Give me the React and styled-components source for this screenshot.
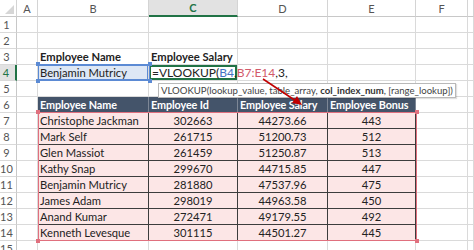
import React from 'react';
import styled, { createGlobalStyle, css } from 'styled-components';

const GlobalStyle = createGlobalStyle`
    body {
        margin: 0;
        background: #fff;
        overflow: hidden;
        font-family: Lato, "Liberation Sans", sans-serif;
    }
`;

const COLS = ['A', 'B', 'C', 'D', 'E', 'F', ''];
const ROW_H = 16;
const HEAD_H = 17;

const Sheet = styled.div`
    position: relative;
    width: 474px;
    height: 250px;
    overflow: hidden;
    display: grid;
    grid-template-columns: 17px 21px 111px 89px 90px 88px 52px 1fr;
    grid-template-rows: ${HEAD_H}px;
    grid-auto-rows: ${ROW_H}px;
    color: #222;
`;

const Corner = styled.div`
    position: relative;
    border-right: 1px solid #d4d4d4;
    border-bottom: 1px solid #c8c8c8;
    &::after {
        content: '';
        position: absolute;
        right: 2px;
        bottom: 2px;
        border-left: 9px solid transparent;
        border-bottom: 9px solid #d6d6d6;
    }
`;

const ColHead = styled.div`
    box-sizing: border-box;
    display: flex;
    align-items: center;
    justify-content: center;
    font-size: 11px;
    color: #555;
    border-right: 1px solid #d4d4d4;
    border-bottom: 1px solid #c8c8c8;
    ${p => p.$active && css`
        background: #e2e2e2;
        color: #217346;
        font-weight: 700;
        border-bottom: 2px solid #217346;
    `}
`;

const RowHead = styled.div`
    box-sizing: border-box;
    display: flex;
    align-items: center;
    justify-content: center;
    padding-right: 3px;
    font-size: 11px;
    color: #555;
    border-right: 1px solid #c8c8c8;
    border-bottom: 1px solid #d9d9d9;
    ${p => p.$active && css`
        background: #e2e2e2;
        color: #217346;
        border-right: 2px solid #217346;
    `}
`;

const Cell = styled.div`
    box-sizing: border-box;
    display: flex;
    align-items: center;
    padding: 0 2px;
    font-size: 11.2px;
    white-space: nowrap;
    border-right: 1px solid #dadada;
    border-bottom: 1px solid #dadada;
    justify-content: ${p => (p.$center ? 'center' : 'flex-start')};
    font-weight: ${p => (p.$bold ? 700 : 400)};
    ${p => p.$variant === 'th' && css`
        background: #44546a;
        color: #fff;
        font-size: 10.8px;
        letter-spacing: -0.1px;
        border-right-color: #7d8796;
        border-bottom-color: #44546a;
    `}
    ${p => p.$variant === 'td' && css`
        background: #fce6e6;
        border-right-color: #3c3c3c;
        border-bottom-color: #3c3c3c;
    `}
    ${p => p.$variant === 'ref' && css`
        background: #dde7f5;
        box-shadow: inset 0 0 0 1px #5b8ad4;
    `}
    ${p => p.$variant === 'active' && css`
        position: relative;
        z-index: 2;
        overflow: visible;
        box-shadow: inset 0 0 0 2px #217346;
        padding-left: 3px;
        font-size: 12px;
    `}
`;

const RefB = styled.span`
    color: #4472c4;
`;

const RefR = styled.span`
    color: #d25a6a;
`;

const Handles = styled.div`
    position: absolute;
    box-sizing: border-box;
    pointer-events: none;
    z-index: 3;
    border: ${p => p.$w}px solid ${p => p.$color};
    & > i {
        position: absolute;
        width: 4px;
        height: 4px;
        background: ${p => p.$color};
    }
    & > i:nth-child(1) { left: -3px; top: -3px; }
    & > i:nth-child(2) { right: -3px; top: -3px; }
    & > i:nth-child(3) { left: -3px; bottom: -3px; }
    & > i:nth-child(4) { right: -3px; bottom: -3px; }
`;

const Tip = styled.div`
    position: absolute;
    z-index: 4;
    left: 158px;
    top: 83px;
    height: 15px;
    box-sizing: border-box;
    padding: 0 2px;
    display: flex;
    align-items: center;
    background: #fff;
    border: 1px solid #b9b9b9;
    box-shadow: 1px 1px 1px rgba(0, 0, 0, 0.12);
    font-size: 9.6px;
    color: #444;
    white-space: nowrap;
    & b {
        font-weight: 700;
        color: #333;
    }
`;

const Arrow = styled.svg`
    position: absolute;
    left: 0;
    top: 0;
    z-index: 5;
    pointer-events: none;
`;

const employees = [
    ['Christophe Jackman', '302663', '44273.66', '443'],
    ['Mark Self', '261715', '51200.73', '512'],
    ['Glen Massiot', '261459', '51250.87', '513'],
    ['Kathy Snap', '299670', '44715.85', '447'],
    ['Benjamin Mutricy', '281880', '47537.96', '475'],
    ['James Adam', '298019', '44963.58', '450'],
    ['Anand Kumar', '272471', '49179.55', '492'],
    ['Kenneth Levesque', '301115', '44501.27', '445']
];

const tableHead = ['Employee Name', 'Employee Id', 'Employee Salary', 'Employee Bonus'];

// cells for columns A..G of one row
function rowCells(r) {
    const blank = i => <Cell key={i} />;
    const out = [blank('a')];
    if (r === 3) {
        out.push(<Cell key="b" $bold>Employee Name</Cell>);
        out.push(<Cell key="c" $bold>Employee Salary</Cell>);
        out.push(blank('d'), blank('e'));
    } else if (r === 4) {
        out.push(<Cell key="b" $variant="ref">Benjamin Mutricy</Cell>);
        out.push(
            <Cell key="c" $variant="active">
                =VLOOKUP(<RefB>B4</RefB>,<RefR>B7:E14</RefR>,3,
            </Cell>
        );
        out.push(blank('d'), blank('e'));
    } else if (r === 6) {
        tableHead.forEach((t, i) => out.push(<Cell key={'h' + i} $variant="th" $bold>{t}</Cell>));
    } else if (r >= 7 && r <= 14) {
        employees[r - 7].forEach((v, i) => (
            out.push(<Cell key={'d' + i} $variant="td" $center={i > 0}>{v}</Cell>)
        ));
    } else {
        out.push(blank('b'), blank('c'), blank('d'), blank('e'));
    }
    out.push(blank('f'), blank('g'));
    return out;
}

const rowTop = r => HEAD_H + (r - 1) * ROW_H;

export default function App() {
    const rows = Array.from({ length: 15 }, (_, i) => i + 1);
    return (
        <>
            <GlobalStyle />
            <Sheet>
                <Corner />
                {COLS.map(c => <ColHead key={c || 'g'} $active={c === 'C'}>{c}</ColHead>)}
                {rows.map(r => (
                    <React.Fragment key={r}>
                        <RowHead $active={r === 4}>{r}</RowHead>
                        {rowCells(r)}
                    </React.Fragment>
                ))}

                <Handles $w={1} $color="#5b8ad4"
                    style={{ left: 38, top: rowTop(4) - 1, width: 112, height: ROW_H + 1 }}>
                    <i /><i /><i /><i />
                </Handles>
                <Handles $w={1.5} $color="#e0707e"
                    style={{ left: 38, top: rowTop(7) - 1, width: 379, height: 8 * ROW_H + 1 }}>
                    <i /><i /><i /><i />
                </Handles>

                <Tip>
                    VLOOKUP(lookup_value, table_array,&nbsp;<b>col_index_num</b>, [range_lookup])
                </Tip>

                <Arrow width="474" height="250" viewBox="0 0 474 250">
                    <line x1="263" y1="79" x2="296" y2="101" stroke="#c00000" strokeWidth="1.6" />
                    <polygon points="302,105 292,103 297,96" fill="#c00000" />
                </Arrow>
            </Sheet>
        </>
    );
}
